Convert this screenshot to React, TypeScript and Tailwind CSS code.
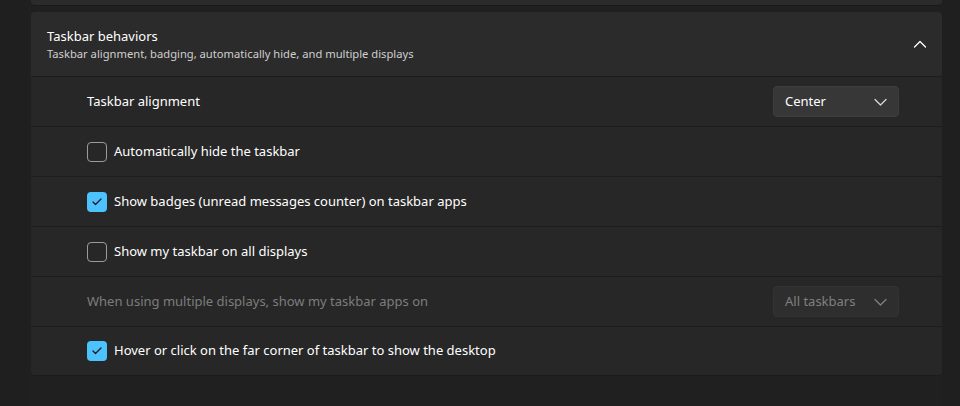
import { Check } from 'lucide-react'

const font = { fontFamily: '"Noto Sans", "Segoe UI", sans-serif' }

function Chevron({ up, className }: { up?: boolean; className?: string }) {
  return (
    <svg width="13" height="8" viewBox="0 0 13 8" fill="none" className={className}>
      <path
        d={up ? 'M1 7 L6.5 1.5 L12 7' : 'M1 1.5 L6.5 7 L12 1.5'}
        stroke="currentColor"
        strokeWidth="1.3"
        strokeLinecap="round"
        strokeLinejoin="round"
      />
    </svg>
  )
}

function Checkbox({ checked }: { checked: boolean }) {
  if (checked) {
    return (
      <div className="w-5 h-5 rounded-[4px] bg-[#4cc2ff] flex items-center justify-center">
        <Check className="w-3 h-3 text-[#1b1b1b]" strokeWidth={2.5} />
      </div>
    )
  }
  return <div className="w-5 h-5 rounded-[4px] border border-[#9b9b9b] bg-[#272727]" />
}

function Select({ value, disabled }: { value: string; disabled?: boolean }) {
  return (
    <div
      className={`w-[126px] h-[31px] rounded-[4px] border flex items-center justify-between pl-[11px] pr-[11px] text-[13px] ${
        disabled
          ? 'bg-[#2e2e2e] border-[#333333] text-[#808080]'
          : 'bg-[#373737] border-[#3d3d3d] text-white'
      }`}
    >
      <span>{value}</span>
      <Chevron className={disabled ? 'text-[#808080]' : 'text-[#d8d8d8]'} />
    </div>
  )
}

function Row({ children, last }: { children: React.ReactNode; last?: boolean }) {
  return (
    <div
      className={`flex items-center justify-between pl-[56px] pr-[43px] bg-[#272727] ${
        last ? 'h-[48px]' : 'h-[50px] border-b border-[#1d1d1d]'
      }`}
    >
      {children}
    </div>
  )
}

function CheckRow({ label, checked, last }: { label: string; checked: boolean; last?: boolean }) {
  return (
    <Row last={last}>
      <div className="flex items-center gap-[7px] text-[13px] text-white">
        <Checkbox checked={checked} />
        <span>{label}</span>
      </div>
    </Row>
  )
}

export default function App() {
  return (
    <div className="w-[960px] h-[406px] bg-[#202020] flex" style={font}>
      <div className="w-[28px] bg-[#1f1f1f]" />
      <div className="w-[914px] pl-[3px] flex flex-col">
        <div className="h-[6px] bg-[#2b2b2b] rounded-b-[4px] border-b border-[#1a1a1a]" />
        <div className="mt-[6px] rounded-[4px] overflow-hidden border-b border-[#1c1c1c]">
          <div className="h-[65px] bg-[#2b2b2b] border-b border-[#1d1d1d] flex items-center justify-between pl-[16px] pr-[15px]">
            <div className="flex flex-col">
              <span className="text-[13px] text-white leading-[19px]">Taskbar behaviors</span>
              <span className="text-[11.2px] text-[#cfcfcf] leading-[15px]">
                Taskbar alignment, badging, automatically hide, and multiple displays
              </span>
            </div>
            <Chevron up className="text-white w-[14px] h-[8px]" />
          </div>
          <Row>
            <span className="text-[13px] text-white">Taskbar alignment</span>
            <Select value="Center" />
          </Row>
          <CheckRow label="Automatically hide the taskbar" checked={false} />
          <CheckRow label="Show badges (unread messages counter) on taskbar apps" checked />
          <CheckRow label="Show my taskbar on all displays" checked={false} />
          <Row>
            <span className="text-[13px] text-[#7d7d7d]">When using multiple displays, show my taskbar apps on</span>
            <Select value="All taskbars" disabled />
          </Row>
          <CheckRow label="Hover or click on the far corner of taskbar to show the desktop" checked last />
        </div>
      </div>
      <div className="flex-1 bg-[#1f1f1f]" />
    </div>
  )
}
